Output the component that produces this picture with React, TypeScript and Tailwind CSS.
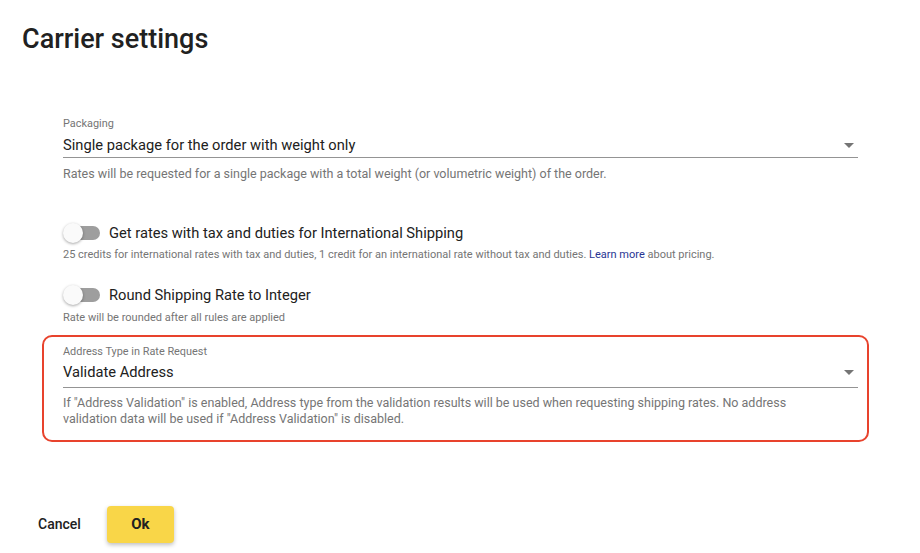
import React from "react";

const ArrowDrop = () => (
  <svg viewBox="0 0 24 24" className="w-6 h-6 -mr-[3px] shrink-0 fill-[#757575]">
    <path d="M7 10l5 5 5-5z" />
  </svg>
);

const Toggle = () => (
  <div className="relative w-[37px] h-[20px] shrink-0">
    <div className="absolute left-[3px] top-[3px] w-[34px] h-[14px] rounded-full bg-[#9e9e9e]" />
    <div className="absolute left-0 top-0 w-[20px] h-[20px] rounded-full bg-[#fafafa] shadow-[0_1px_3px_rgba(0,0,0,0.35)]" />
  </div>
);

export default function App() {
  return (
    <div className="w-[920px] h-[553px] bg-white overflow-hidden font-['Roboto',sans-serif] text-[#212121]">
      <h1 className="pl-[22px] pt-[23px] text-[27px] leading-[32px] font-medium">Carrier settings</h1>

      <div className="mt-[61px] pl-[63px] pr-[62px]">
        {/* Packaging */}
        <div>
          <div className="text-[10.9px] leading-[16px] text-[#757575]">Packaging</div>
          <div className="mt-[1px] flex items-center justify-between border-b border-[#949494] h-[25px] pb-[1px]">
            <span className="text-[14.7px] leading-[20px]">Single package for the order with weight only</span>
            <ArrowDrop />
          </div>
          <p className="mt-[8px] text-[12.5px] leading-[16px] text-[#757575]">
            Rates will be requested for a single package with a total weight (or volumetric weight) of the order.
          </p>
        </div>

        {/* Tax and duties */}
        <div className="mt-[41px]">
          <div className="flex items-center gap-[9px]">
            <Toggle />
            <span className="text-[14.7px] leading-[20px]">Get rates with tax and duties for International Shipping</span>
          </div>
          <p className="mt-[6px] text-[11px] leading-[12px] text-[#757575]">
            25 credits for international rates with tax and duties, 1 credit for an international rate without tax and duties.{" "}
            <span className="text-[#283593]">Learn more</span> about pricing.
          </p>
        </div>

        {/* Round rate */}
        <div className="mt-[24px]">
          <div className="flex items-center gap-[9px]">
            <Toggle />
            <span className="text-[14.7px] leading-[20px]">Round Shipping Rate to Integer</span>
          </div>
          <p className="mt-[7px] text-[11px] leading-[12px] text-[#757575]">Rate will be rounded after all rules are applied</p>
        </div>

        {/* Address type */}
        <div className="mt-[11px] -ml-[21px] -mr-[11px] border-2 border-[#e8432d] rounded-[10px] pl-[19px] pr-[9px] pt-[7px] pb-[14px]">
          <div className="text-[10.9px] leading-[16px] text-[#757575]">Address Type in Rate Request</div>
          <div className="flex items-center justify-between border-b border-[#949494] pb-[3px]">
            <span className="text-[14.7px] leading-[20px]">Validate Address</span>
            <ArrowDrop />
          </div>
          <p className="mt-[7px] mr-[24px] text-[12.5px] leading-[15.5px] text-[#757575]">
            If "Address Validation" is enabled, Address type from the validation results will be used when requesting shipping rates. No address validation data will be used if "Address Validation" is disabled.
          </p>
        </div>
      </div>

      <div className="mt-[64px] pl-[22px] flex items-center gap-[10px]">
        <button className="h-[37px] px-4 text-[14px] font-medium">Cancel</button>
        <button className="w-[67px] h-[37px] rounded-[4px] bg-[#f9d648] text-[15px] font-bold shadow-[0_2px_4px_rgba(0,0,0,0.25)]">
          Ok
        </button>
      </div>
    </div>
  );
}
